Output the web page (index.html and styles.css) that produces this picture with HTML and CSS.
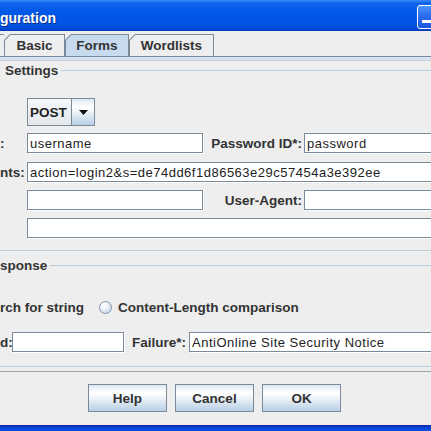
FILE: index.html
```html
<!DOCTYPE html>
<html>
<head>
<meta charset="utf-8">
<title>Configuration</title>
<link rel="stylesheet" href="styles.css">
</head>
<body>
<div class="win">
  <div class="titlebar">
    <span class="title">guration</span>
    <span class="minbtn"><span class="minbar"></span></span>
  </div>
  <div class="tabstrip">
    <div class="tab partial"><div class="tab-in"></div></div>
    <div class="tab basic"><div class="tab-in">Basic</div></div>
    <div class="tab forms sel"><div class="tab-in">Forms</div></div>
    <div class="tab wordlists"><div class="tab-in">Wordlists</div></div>
  </div>
  <div class="tabline"></div>
  <div class="panel">
    <section class="group settings">
      <div class="legend"><span class="legend-text">Settings</span><span class="legend-line"></span></div>
      <div class="combo-row">
        <div class="combo">
          <span class="combo-value">POST</span>
          <span class="combo-arrow"><svg width="9" height="5" viewBox="0 0 9 5"><polygon points="0,0 9,0 4.5,5" fill="#111"/></svg></span>
        </div>
      </div>
      <div class="form-grid">
        <span class="lbl">:</span>
        <div class="field">username</div>
        <span class="lbl lbl2">Password ID*:</span>
        <div class="field">password</div>

        <span class="lbl">nts:</span>
        <div class="field span3">action=login2&amp;s=de74dd6f1d86563e29c57454a3e392ee</div>

        <span class="lbl"></span>
        <div class="field"></div>
        <span class="lbl lbl2">User-Agent:</span>
        <div class="field"></div>

        <span class="lbl"></span>
        <div class="field span3"></div>
      </div>
    </section>
    <section class="group response">
      <div class="legend"><span class="legend-text">sponse</span><span class="legend-line"></span></div>
      <div class="radio-row">
        <span class="lbl">rch for string</span>
        <span class="radio"></span>
        <span class="lbl radio-lbl">Content-Length comparison</span>
      </div>
      <div class="fail-row">
        <span class="lbl">d:</span>
        <div class="field succ"></div>
        <span class="lbl fail-lbl">Failure*:</span>
        <div class="field grow">AntiOnline Site Security Notice</div>
      </div>
    </section>
    <div class="pane-bottom"></div>
  </div>
  <div class="buttons">
    <div class="btn">Help</div>
    <div class="btn">Cancel</div>
    <div class="btn">OK</div>
  </div>
  <div class="frame-bottom"></div>
</div>
</body>
</html>
```

FILE: styles.css
```css
html, body {
  margin: 0;
  padding: 0;
  background: #eeeeee;
  overflow: hidden;
  font-family: "Liberation Sans", Arial, sans-serif;
}

.win {
  width: 431px;
  height: 431px;
  overflow: hidden;
  background: #eeeeee;
  display: flex;
  flex-direction: column;
}

/* ---------- title bar ---------- */
.titlebar {
  flex: none;
  height: 31px;
  display: flex;
  justify-content: space-between;
  align-items: flex-start;
  background: linear-gradient(to bottom, #3a8cf8 0px, #0f64ec 3px, #0058e8 12px, #0255e4 24px, #0047d4 29px, #003cb8 31px);
}

.title {
  color: #ffffff;
  font-weight: bold;
  font-size: 14px;
  line-height: 16px;
  margin-top: 10px;
  text-shadow: 1px 1px 0 #0a2c8c;
}

.minbtn {
  width: 21px;
  height: 24px;
  margin-top: 5px;
  margin-right: -7px;
  box-sizing: border-box;
  border: 1px solid #ffffff;
  border-radius: 3px;
  background: linear-gradient(to bottom, #4b94fa 0%, #2a6cef 45%, #1a57e0 100%);
  display: flex;
  align-items: flex-end;
  padding: 0 0 5px 4px;
}

.minbar {
  width: 10px;
  height: 3px;
  background: #ffffff;
}

/* ---------- tabs ---------- */
.tabstrip {
  flex: none;
  height: 25px;
  display: flex;
  align-items: flex-end;
}

.tab {
  height: 22px;
  box-sizing: border-box;
  padding: 1px 1px 0 1px;
  background: #7a8a99;
  clip-path: polygon(0 6px, 6px 0, 100% 0, 100% 100%, 0 100%);
}

.tab-in {
  height: 100%;
  background: #eeeeee;
  clip-path: polygon(0 5.4px, 5.4px 0, 100% 0, 100% 100%, 0 100%);
  display: flex;
  align-items: center;
  justify-content: center;
  font-weight: bold;
  font-size: 13.5px;
  color: #333333;
}

.partial {
  width: 4px;
  padding: 1px 0 0 0;
  clip-path: none;
}

.partial .tab-in {
  clip-path: none;
}

.basic { width: 61px; }
.forms { width: 64px; }
.wordlists { width: 85px; }

.sel .tab-in {
  background: #c8daee;
}

.tabline {
  flex: none;
  height: 3px;
  border-top: 1px solid #7a8a99;
  border-bottom: 1px solid #c6cfd8;
  background: #d6e3f0;
}

/* ---------- panel ---------- */
.panel {
  flex: none;
}

.group {
  border-bottom: 1px solid #bccbd9;
}

.settings {
  margin-top: 1px;
  padding-bottom: 12px;
}

.response {
  margin-top: 6px;
  padding-bottom: 14px;
}

.legend {
  height: 17px;
  display: flex;
  align-items: center;
}

.legend-text {
  font-weight: bold;
  font-size: 13.5px;
  color: #333333;
}

.settings .legend-text {
  margin-left: 5px;
}

.legend-line {
  flex: 1;
  height: 1px;
  margin-left: 3px;
  background: #bccbd9;
}

.combo-row {
  margin-top: 19px;
  padding-left: 27px;
  display: flex;
}

.combo {
  width: 68px;
  height: 28px;
  box-sizing: border-box;
  border: 1px solid #7a8a99;
  display: flex;
}

.combo-value {
  flex: 1;
  display: flex;
  align-items: center;
  padding-left: 2px;
  background: linear-gradient(to bottom, #f6f8fa 0%, #e9edf1 60%, #e2e7ec 100%);
  font-weight: bold;
  font-size: 13.5px;
  color: #222222;
}

.combo-arrow {
  width: 22px;
  border-left: 1px solid #7a8a99;
  display: flex;
  align-items: center;
  justify-content: center;
  background: linear-gradient(to bottom, #dde8f3 0%, #ffffff 30%, #f2f6fa 45%, #b8cfe5 100%);
}

.form-grid {
  margin-top: 7px;
  margin-right: -12px;
  display: grid;
  grid-template-columns: 27px 177px 100px 1fr;
  grid-template-rows: 21px 20px 20px 20px;
  row-gap: 8px;
}

.lbl {
  display: flex;
  align-items: center;
  white-space: nowrap;
  font-weight: bold;
  font-size: 13.5px;
  color: #333333;
}

.lbl2 {
  justify-content: flex-end;
  padding-right: 2px;
}

.field {
  height: 20px;
  box-sizing: border-box;
  border: 1px solid #7a8a99;
  box-shadow: 1px 1px 0 #ffffff;
  background: #ffffff;
  padding-left: 2px;
  display: flex;
  align-items: center;
  white-space: nowrap;
  overflow: hidden;
  font-size: 13px;
  letter-spacing: 0.5px;
  color: #222222;
  margin-right: 1px;
}

.span3 {
  grid-column: 2 / 5;
}

.radio-row {
  margin-top: 25px;
  height: 16px;
  display: flex;
  align-items: center;
}

.radio {
  width: 13px;
  height: 13px;
  margin-left: 15px;
  box-sizing: border-box;
  border: 1px solid #8294aa;
  border-radius: 50%;
  background: radial-gradient(circle at 35% 30%, #ffffff 0%, #eef3f9 35%, #b8cfe5 100%);
}

.radio-lbl {
  margin-left: 6px;
}

.fail-row {
  margin-top: 17px;
  margin-right: -12px;
  height: 20px;
  display: flex;
}

.fail-row .lbl {
  width: 12px;
}

.fail-row .fail-lbl {
  width: auto;
  margin-left: 7px;
}

.succ {
  width: 112px;
}

.grow {
  flex: 1;
  margin-left: 3px;
}

.pane-bottom {
  margin-top: 4px;
  height: 1px;
  background: #98a4b0;
}

/* ---------- buttons ---------- */
.buttons {
  flex: none;
  margin-top: 12px;
  padding-left: 88px;
  display: flex;
  gap: 8px;
}

.btn {
  width: 79px;
  height: 28px;
  box-sizing: border-box;
  border: 1px solid #7a8a99;
  background: linear-gradient(to bottom, #dde8f3 0%, #ffffff 30%, #f3f7fb 45%, #b8cfe5 100%);
  display: flex;
  align-items: center;
  justify-content: center;
  font-weight: bold;
  font-size: 13.5px;
  color: #333333;
}

.frame-bottom {
  flex: none;
  margin-top: 13px;
  height: 6px;
  background: linear-gradient(to bottom, #0a2aa8 0px, #0a2aa8 1px, #0642d4 2px, #0850e4 6px);
}
```
